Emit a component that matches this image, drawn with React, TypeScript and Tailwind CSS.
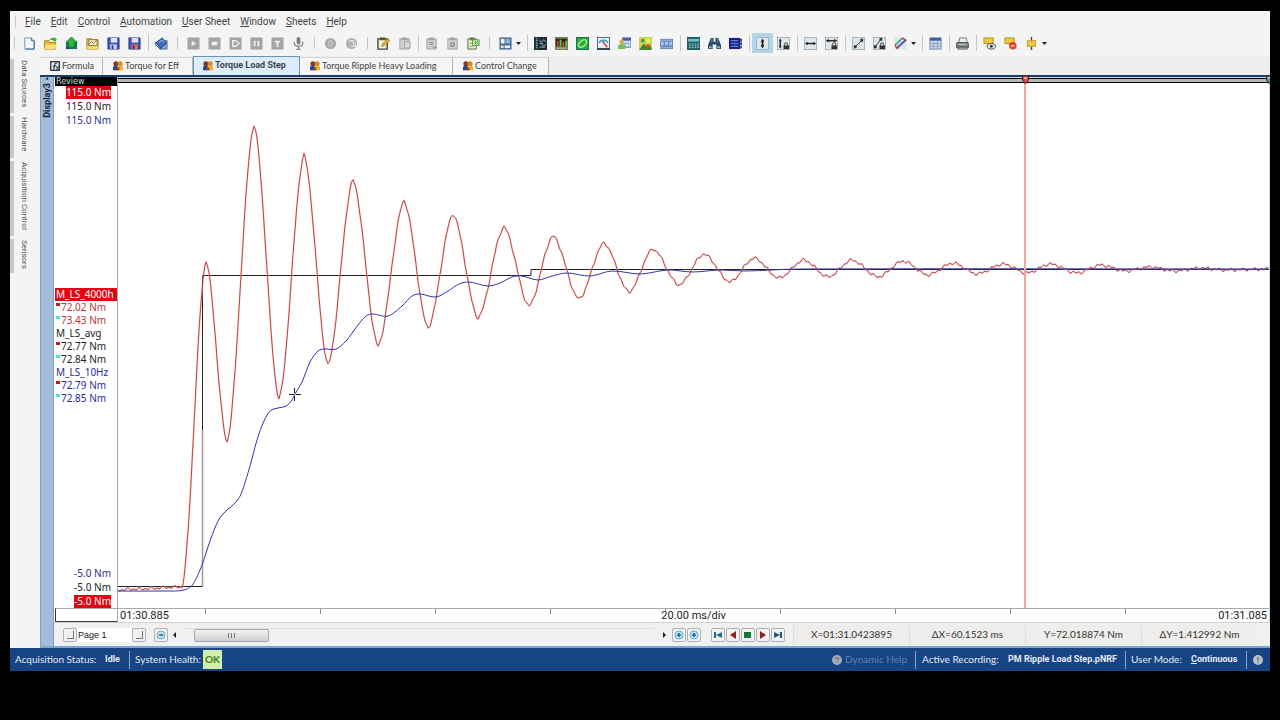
import type { ReactNode } from 'react';
import { clsx } from 'clsx';

/* ---------- toolbar icons, all on a 14x14 grid ---------- */

const Sheet = () => <path d="M2 1h7l3 3v9H2z" fill="#f4f8fd" stroke="#6f8db3" />;

const Floppy = ({ label }: { label: string }) => (
  <>
    <path d="M1 1h12v12H1z" fill="#3c55b8" stroke="#27398c" />
    <rect x="4" y="1" width="7" height="5" fill="#dfe6f8" />
    <rect x="3.500" y="8" width="7" height="5" fill={label} />
    <rect x="5" y="9" width="2" height="4" fill="#2c3a80" />
  </>
);

const GrayBox = ({ children }: { children: ReactNode }) => (
  <>
    <rect x="0.500" y="0.500" width="13" height="13" fill="#a4a4a4" />
    {children}
  </>
);

const GrayClip = ({ children }: { children?: ReactNode }) => (
  <>
    <path d="M2 2h10v11H2z" fill="#cfcfcf" stroke="#a2a2a2" />
    <rect x="4" y="0.500" width="6" height="3" rx="1" fill="#a2a2a2" />
    {children}
  </>
);

const Panel = ({ children }: { children: ReactNode }) => (
  <>
    <rect x="0.500" y="0.500" width="13" height="13" fill="#dce6ec" stroke="#a3b3bc" />
    {children}
  </>
);

const Lock = () => (
  <>
    <path d="M8 9V8a1.500 1.500 0 0 1 3.500 0v1" fill="none" stroke="#333" />
    <rect x="7" y="9" width="6" height="4" fill="#333" />
  </>
);

const Users = () => (
  <>
    <circle cx="4" cy="4" r="3.500" fill="#7a3b28" />
    <circle cx="10" cy="4" r="3.500" fill="#d88a25" />
    <path d="M0 13V8q4-3 7 0v5z" fill="#27439b" />
    <path d="M7 13V8q4-3 7 0v5z" fill="#e9b52a" />
    <path d="M5 9h4v4H5z" fill="#b23c22" />
  </>
);

const ICONS: Record<string, ReactNode> = {
  newFile: (
    <>
      <Sheet />
      <path d="M9 1v3h3" fill="#b9cde6" stroke="#49698f" />
      <path d="M12 4v9H3" fill="none" stroke="#3f5d83" />
    </>
  ),
  openFile: (
    <>
      <path d="M0.500 4h5l1 2h6v7H0.500z" fill="#e5b83b" stroke="#a98319" />
      <path d="M2 8h12l-2 5H0.500z" fill="#fbe382" />
      <path d="M6 3q2-3 5-2V0l3 3-3 3V4q-3-1-5-1z" fill="#3cab38" />
    </>
  ),
  loadFile: (
    <>
      <path d="M1 5h12v8H1z" fill="#1d7562" />
      <path d="M7 0l6 6h-3v5H4V6H1z" fill="#2fb739" stroke="#16793a" />
      <path d="M1 11h4v2H1z" fill="#264c9b" />
    </>
  ),
  openChart: (
    <>
      <path d="M1 2h5l1 1h6v10H1z" fill="#e6c341" stroke="#9e8220" />
      <rect x="3" y="3" width="9" height="6" fill="#f3f7d4" stroke="#7d7931" />
      <path d="M3 8l3-3 2 2 4-4" fill="none" stroke="#c8432c" />
      <path d="M1 10h12v3H1z" fill="#f6dd70" />
    </>
  ),
  save: <Floppy label="#cfd9f4" />,
  saveAs: <Floppy label="#e56a63" />,
  book: (
    <>
      <path d="M5 4h8v9H5z" fill="#8fa9cc" stroke="#49679a" />
      <path d="M1 6l7-5 4 6-6 5z" fill="#3a6fbb" stroke="#1c3f7f" />
      <path d="M1 6l5 6v1L0 8z" fill="#dbe7f5" stroke="#1c3f7f" />
      <path d="M4 6l4-3 2 3" fill="none" stroke="#a9cdf4" />
    </>
  ),
  play: <GrayBox><path d="M5 4l5 3-5 3z" fill="#efefef" /></GrayBox>,
  stop: <GrayBox><path d="M4 5h6v4H4z" fill="#efefef" /></GrayBox>,
  step: <GrayBox><path d="M4 4h3l4 3-4 3H4z" fill="none" stroke="#efefef" strokeWidth="1.500" /></GrayBox>,
  pause: <GrayBox><path d="M4 4h2v6H4zM8 4h2v6H8z" fill="#efefef" /></GrayBox>,
  trigger: <GrayBox><path d="M4 4h6v2H8v5H6V6H4z" fill="#efefef" /></GrayBox>,
  mic: (
    <>
      <rect x="5" y="0" width="4" height="8" rx="2" fill="#7c7c7c" />
      <path d="M2.500 5v2q0 3 4.500 3t4.500-3V5M7 10v3M4.500 13.500h5" fill="none" stroke="#8b8b8b" strokeWidth="1.500" />
    </>
  ),
  zero: (
    <>
      <circle cx="7" cy="7" r="6" fill="#a9a9a9" />
      <ellipse cx="7" cy="7" rx="2" ry="3" fill="none" stroke="#dedede" />
    </>
  ),
  calibrate: (
    <>
      <circle cx="7" cy="7" r="6" fill="#b0b0b0" />
      <path d="M4 4h5v4M6 10h5V6" fill="none" stroke="#dedede" strokeWidth="1.500" />
    </>
  ),
  editSheet: (
    <>
      <path d="M1 2h10v11H1z" fill="#f5f1d8" stroke="#4a4636" strokeWidth="1.500" />
      <rect x="3" y="0.500" width="6" height="3" fill="#57513a" />
      <path d="M5 10l1-3 6-5 2 2-6 5z" fill="#e6b528" stroke="#59461a" strokeWidth="0.500" />
    </>
  ),
  copySheet: <GrayClip><path d="M7 5h6v7H7z" fill="#d8d8d8" stroke="#a2a2a2" /></GrayClip>,
  addSheet: <GrayClip><path d="M4 6h5M4 8h5M8 11h5" stroke="#8c8c8c" /></GrayClip>,
  sheetOptions: <GrayClip><circle cx="7" cy="8" r="2" fill="none" stroke="#8c8c8c" strokeWidth="1.500" /></GrayClip>,
  excel: (
    <>
      <path d="M1 2h9v11H1z" fill="#e6efc8" stroke="#59654a" />
      <rect x="3" y="0.500" width="5" height="3" fill="#6a7550" />
      <path d="M6 3h7v6H6z" fill="#d9f0c5" stroke="#4f963f" />
      <path d="M8 4l4 4M12 4L8 8" stroke="#2f7d2c" />
      <path d="M3 7h2M3 10h4" stroke="#6f9d50" />
    </>
  ),
  layout: (
    <>
      <rect x="0.500" y="0.500" width="13" height="13" fill="#3f689f" />
      <path d="M2 2h4v5H2z" fill="#f6f3dc" />
      <path d="M7 2h5v5H7z" fill="#8fb4dd" />
      <path d="M2 9h3v3H2z" fill="#f2e6a6" />
      <path d="M6 9h6v3H6z" fill="#e3edf8" />
    </>
  ),
  wave: (
    <>
      <rect width="14" height="14" fill="#1e2c33" />
      <path d="M3 1v12" stroke="#8dc3d5" strokeDasharray="1 1" strokeWidth="2" />
      <path d="M6 3l2 3 2-3 3 2M6 7h3l1 3 3-2M6 11h6" fill="none" stroke="#91aeb5" />
    </>
  ),
  bars: (
    <>
      <rect width="14" height="14" fill="#70805c" />
      <rect x="1" y="2" width="12" height="8" fill="#23271b" />
      <path d="M3 4v6M9 5v5" stroke="#d3442b" strokeWidth="2" />
      <path d="M6 3v7M12 4v6" stroke="#63c541" strokeWidth="2" />
      <path d="M1 12h12" stroke="#b7c7a1" />
    </>
  ),
  xy: (
    <>
      <rect width="14" height="14" fill="#27694a" />
      <rect x="1" y="1" width="12" height="12" fill="#24a948" />
      <ellipse cx="7" cy="7" rx="5" ry="3" fill="none" stroke="#a3f37b" strokeWidth="1.500" transform="rotate(-40 7 7)" />
    </>
  ),
  meter: (
    <>
      <rect x="0.500" y="0.500" width="13" height="12" fill="#e8f2f6" stroke="#4c6470" />
      <path d="M2 6q5-5 10 0" fill="none" stroke="#4b9fc2" strokeWidth="2" />
      <path d="M6 5l5 6" stroke="#c43131" strokeWidth="1.500" />
      <path d="M0 13h14" stroke="#33464f" strokeWidth="2" />
    </>
  ),
  userTable: (
    <>
      <rect x="5" y="1" width="9" height="10" fill="#e4eefb" stroke="#4d73b5" />
      <path d="M5 2.500h9" stroke="#3d61a8" strokeWidth="3" />
      <path d="M8 4v7M11 4v7M5 7h9" stroke="#92abd0" />
      <circle cx="4" cy="5" r="2.500" fill="#e0a95b" />
      <path d="M0 13V9q4-3 8 0v4z" fill="#6fc45d" />
    </>
  ),
  image: (
    <>
      <rect width="14" height="14" fill="#cfd84a" />
      <path d="M0 14l5-7 4 4 3-2 2 5z" fill="#3e8a33" />
      <circle cx="4" cy="4" r="2" fill="#4c9c3d" />
      <circle cx="10" cy="4" r="2" fill="#f2ef9a" />
      <rect x="8" y="8" width="4" height="3" fill="#d24d37" />
    </>
  ),
  film: (
    <>
      <rect y="2" width="14" height="11" fill="#6d86bd" />
      <path d="M0 3.500h14M0 11.500h14" stroke="#dbe5f6" strokeDasharray="1 1" />
      <path d="M1 5h3v4H1zM5.500 5h3v4h-3zM10 5h3v4h-3z" fill="#a9c2ee" />
    </>
  ),
  grid: (
    <>
      <rect width="14" height="14" fill="#1f5966" />
      <path d="M1 2h12v3H1z" fill="#69c0bd" />
      <path d="M2 7.500h11M2 9.500h11M2 11.500h11" stroke="#9fe0d0" strokeDasharray="2 1" />
    </>
  ),
  binoculars: (
    <>
      <path d="M3 1h3v4h2V1h3l3 8v4H9V8H5v5H0V9z" fill="#2d4a66" />
      <path d="M1 10h3v2H1zM10 10h3v2h-3z" fill="#8fb6d5" />
      <path d="M4 2v4M10 2v4" stroke="#6d93b5" />
    </>
  ),
  display: (
    <>
      <rect y="1" width="12" height="12" fill="#1a2186" />
      <path d="M2 4h8M2 7h3l1-1 1 2 1-1h2M2 10h8" fill="none" stroke="#7f9cf2" />
      <path d="M12 2h2v3h-2zM12 6h2v3h-2zM12 10h2v2h-2z" fill="#39406c" />
    </>
  ),
  cursorV: (
    <Panel>
      <path d="M7 3v8" stroke="#222" strokeWidth="2" />
      <path d="M5 5l2-3 2 3zM5 9l2 3 2-3z" fill="#222" />
    </Panel>
  ),
  cursorVLock: <Panel><path d="M3.500 3v8" stroke="#222" strokeWidth="1.500" /><path d="M2 4.500l1.500-3L5 4.500zM2 9.500l1.500 3L5 9.500z" fill="#222" /><Lock /></Panel>,
  cursorH: <Panel><path d="M2 7h10" stroke="#222" strokeWidth="1.500" /><path d="M4 5L1 7l3 2zM10 5l3 2-3 2z" fill="#222" /></Panel>,
  cursorHLock: <Panel><path d="M2 4h10" stroke="#222" strokeWidth="1.500" /><path d="M4 2L1 4l3 2zM10 2l3 2-3 2z" fill="#222" /><Lock /></Panel>,
  slope: <Panel><path d="M3 11l8-8" stroke="#333" /><path d="M2 9h3v3H2zM9 2h3v3H9z" fill="#333" /></Panel>,
  slopeLock: <Panel><path d="M2 11l6-8" stroke="#333" /><path d="M1 9h3v3H1zM7 1h3v3H7z" fill="#333" /><Lock /></Panel>,
  measure: (
    <>
      <rect x="0.500" y="0.500" width="13" height="13" fill="#dde7ec" />
      <path d="M1 9l8-8" stroke="#2d9d55" strokeWidth="1.500" />
      <path d="M3 12l10-9" stroke="#4352c9" strokeWidth="2" />
      <path d="M1 9l3 4M9 1l4 3" stroke="#c42f3c" strokeWidth="1.500" />
      <path d="M4 8l2 2M7 5l2 2" stroke="#b34a98" />
    </>
  ),
  table: (
    <>
      <rect x="1" y="1" width="12" height="12" fill="#d3deee" stroke="#6e829f" />
      <path d="M1 2.500h12" stroke="#375ea8" strokeWidth="3" />
      <path d="M5 4v9M9 4v9M1 7h12M1 10h12" stroke="#8c9dba" />
    </>
  ),
  printer: (
    <>
      <path d="M4 1h7l1 5H3z" fill="#eef1f2" stroke="#6e7578" />
      <path d="M1 6h12l1 5H0z" fill="#7f878a" stroke="#4b5153" />
      <path d="M2 11h10v2H2z" fill="#c6cccd" stroke="#4b5153" />
      <path d="M3 8h8" stroke="#cdd3d4" />
    </>
  ),
  noteView: (
    <>
      <path d="M1 1h10v6H8L6 9V7H1z" fill="#f0c83a" stroke="#b08c1e" />
      <ellipse cx="9" cy="10" rx="4.500" ry="3" fill="#dde6da" stroke="#3b4b3f" />
      <circle cx="9" cy="10" r="1.500" fill="#24362c" />
    </>
  ),
  noteDelete: (
    <>
      <path d="M1 1h10v6H8L6 9V7H1z" fill="#f0c83a" stroke="#b08c1e" />
      <circle cx="9.500" cy="9.500" r="4" fill="#e0432d" />
      <path d="M7.500 9.500h4" stroke="#fbd4cc" strokeWidth="1.500" />
    </>
  ),
  marker: (
    <>
      <path d="M7 0v14" stroke="#3f454b" strokeWidth="1.500" />
      <rect x="2.500" y="4" width="9" height="6" fill="#f0c645" stroke="#c29a2c" />
    </>
  ),
  users: <Users />,
  formula: (
    <>
      <rect x="1" y="1" width="12" height="12" fill="#e9edf0" stroke="#36424c" strokeWidth="2" />
      <path d="M10 3q-3-1-3.500 3L5 12M4 7h5M9 8l3 4M12 8l-3 4" fill="none" stroke="#1d2733" strokeWidth="1.500" />
    </>
  ),
};

function Icon({ name, className = 'h-[14px] w-[14px]' }: { name: string; className?: string }) {
  return (
    <svg viewBox="0 0 14 14" className={clsx('shrink-0', className)} aria-hidden="true">
      {ICONS[name]}
    </svg>
  );
}

/* '|' is a thin separator, ':' is the grip between two toolbars, a trailing 'v' adds a drop arrow */
const TOOLBAR = [
  ':', 'newFile', 'openFile', 'loadFile', 'openChart', 'save', 'saveAs', '|', 'book',
  ':', 'play', 'stop', 'step', 'pause', 'trigger', 'mic',
  ':', 'zero', 'calibrate',
  ':', 'editSheet', 'copySheet', '|', 'addSheet', 'sheetOptions', 'excel',
  ':', 'layout v', '|', 'wave', 'bars', 'xy', 'meter', 'userTable', 'image', 'film',
  '|', 'grid', 'binoculars', 'display', '|', 'cursorV', 'cursorVLock',
  '|', 'cursorH', 'cursorHLock', '|', 'slope', 'slopeLock', 'measure v',
  '|', 'table', '|', 'printer', '|', 'noteView', 'noteDelete', 'marker v',
];

const MENU = ['File', 'Edit', 'Control', 'Automation', 'User Sheet', 'Window', 'Sheets', 'Help'];

const TABS = [
  { label: 'Formula', icon: 'formula', width: 'w-[63px]' },
  { label: 'Torque for Eff', icon: 'users', width: 'w-[90px]' },
  { label: 'Torque Load Step', icon: 'users', width: 'w-[107px]', active: true },
  { label: 'Torque Ripple Heavy Loading', icon: 'users', width: 'w-[153px]' },
  { label: 'Control Change', icon: 'users', width: 'w-[96px]' },
];

const DOCKED = [
  { label: 'Data Sources', height: 'h-[54px]' },
  { label: 'Hardware', height: 'h-[42px]' },
  { label: 'Acquisition Control', height: 'h-[75px]' },
  { label: 'Sensors', height: 'h-[34px]' },
];

const CHANNELS = [
  { name: 'M_LS_4000h', values: ['72.02 Nm', '73.43 Nm'], color: 'text-[#c8323c]', head: 'bg-[#e00510] text-white' },
  { name: 'M_LS_avg', values: ['72.77 Nm', '72.84 Nm'], color: 'text-[#222]', head: 'text-[#222]' },
  { name: 'M_LS_10Hz', values: ['72.79 Nm', '72.85 Nm'], color: 'text-[#2a2a9c]', head: 'text-[#2a2a9c]' },
];

const READOUTS = ['X=01:31.0423895', 'ΔX=60.1523 ms', 'Y=72.018874 Nm', 'ΔY=1.412992 Nm'];

/* ---------- signals ---------- */

type Point = [number, number];

// turning points of the 4 kHz torque signal
const TORQUE: Point[] = [
  [117, 590], [135, 589], [182, 587], [206, 261], [227, 442], [254, 125], [279, 399], [304, 155],
  [328, 365], [353, 180], [378, 346], [404, 201], [428, 328], [453, 214], [478, 318],
  [504, 227], [529, 306], [553, 236], [579, 299], [604, 243], [629, 292], [653, 249],
  [679, 285], [704, 254], [730, 282], [754, 258], [779, 278], [804, 260], [828, 277],
  [852, 260], [878, 277], [903, 261], [928, 275], [953, 263], [977, 274], [1003, 264],
  [1027, 273], [1050, 264], [1077, 273], [1101, 265], [1125, 271], [1150, 267],
  [1175, 271], [1200, 268], [1225, 270], [1269, 269],
];

const FILTERED: Point[] = [
  [117, 591], [165, 591], [184, 590], [193, 584], [202, 565], [210, 541], [218, 521], [226, 511],
  [234, 504], [241, 494], [250, 466], [257, 440], [264, 421], [270, 411], [278, 408],
  [286, 406], [292, 400], [295, 394], [302, 382], [310, 362], [318, 351], [324, 349],
  [336, 349], [346, 341], [358, 325], [366, 316], [373, 314], [388, 316], [402, 306],
  [412, 296], [420, 294], [436, 297], [448, 291], [459, 284], [469, 282], [488, 286],
  [500, 283], [512, 277], [522, 276], [538, 280], [552, 276], [567, 273], [590, 276],
  [612, 271], [640, 274], [668, 270], [692, 272], [720, 270], [745, 271], [800, 269],
  [1269, 269],
];

function torquePath() {
  const out: string[] = [];
  for (let i = 0; i < TORQUE.length - 1; i++) {
    const [x0, y0] = TORQUE[i];
    const [x1, y1] = TORQUE[i + 1];
    for (let x = x0; x < x1; x++) {
      const u = (x - x0) / (x1 - x0);
      // a little linear share keeps the peaks pointed
      const t = 0.78 * ((1 - Math.cos(Math.PI * u)) / 2) + 0.22 * u;
      const noise = Math.sin(x * 1.07) * 0.9 + Math.sin(x * 0.53) * 0.8;
      out.push(`${x} ${(y0 + (y1 - y0) * t + noise).toFixed(1)}`);
    }
  }
  return `M${out.join('L')}`;
}

function smoothPath(p: Point[]) {
  let d = `M${p[0][0]} ${p[0][1]}`;
  for (let i = 0; i < p.length - 1; i++) {
    const a = p[Math.max(i - 1, 0)];
    const b = p[i];
    const c = p[i + 1];
    const e = p[Math.min(i + 2, p.length - 1)];
    // tangent scaled by its own segment, so uneven spacing does not overshoot
    const h = (c[0] - b[0]) / 3;
    const mb = (c[1] - a[1]) / (c[0] - a[0]);
    const mc = (e[1] - b[1]) / (e[0] - b[0]);
    d += `C${b[0] + h} ${b[1] + h * mb} ${c[0] - h} ${c[1] - h * mc} ${c[0]} ${c[1]}`;
  }
  return d;
}

function Chart() {
  return (
    <svg viewBox="118 83 1151 525" preserveAspectRatio="none" className="min-h-0 w-full flex-1" role="img" aria-label="Torque">
      <path d="M117 586.500H202.500V275.500H531V269.500H1269" fill="none" stroke="#222" />
      <path d="M202.500 586V430" stroke="#98989c" strokeWidth="1.500" />
      <path d={torquePath()} fill="none" stroke="#f5b5b5" strokeWidth="2" opacity="0.500" />
      <path d={torquePath()} fill="none" stroke="#b03434" strokeWidth="0.900" />
      <path d={smoothPath(FILTERED)} fill="none" stroke="#3434ac" />
      <path d="M1025 82V608" stroke="#f2aaa4" strokeWidth="2" />
      {/* crosshair */}
      <path d="M289 394.500h5M296 394.500h5M294.500 388v5M294.500 396v5" stroke="#222" />
    </svg>
  );
}

function Menu() {
  return (
    <nav className="flex h-[21px] items-center pl-[5px] text-[10px] text-[#444]">
      <span className="mr-[4px] h-3 w-px bg-[#c8c8c8]" />
      {MENU.map((item) => (
        <button key={item} className="px-[5px]">
          <u>{item[0]}</u>
          {item.slice(1)}
        </button>
      ))}
    </nav>
  );
}

function Toolbar() {
  return (
    <div className="mb-[2px] flex h-[22px] items-center">
      {TOOLBAR.map((entry, i) => {
        if (entry === ':') {
          return (
            <span key={i} className="flex w-[11px] shrink-0 justify-center first:w-[9px]">
              <span className="h-3 w-px bg-[#c4c4c4]" />
            </span>
          );
        }
        if (entry === '|') {
          return (
            <span key={i} className="flex w-[6px] shrink-0 justify-center">
              <span className="h-4 w-px bg-[#c4c4c4]" />
            </span>
          );
        }
        const [name, drop] = entry.split(' ');
        return (
          <button
            key={i}
            aria-label={name}
            className={clsx(
              'flex h-5 shrink-0 items-center',
              drop ? 'w-[29px] gap-1 pl-1' : 'w-[21px] justify-center',
              name === 'cursorV' && 'bg-[#b4d4ec]',
            )}
          >
            <Icon name={name} className="h-[13px] w-[13px]" />
            {drop && (
              <svg viewBox="0 0 5 3" className="h-[3px] w-[5px]">
                <path d="M0 0h5L2.500 3z" fill="#222" />
              </svg>
            )}
          </button>
        );
      })}
    </div>
  );
}

function Tabs() {
  return (
    <div role="tablist" className="flex h-[19px] items-end bg-[#eeeeee] font-[Lato,sans-serif] text-[9px] text-[#444]">
      {TABS.map((tab) => (
        <button
          key={tab.label}
          role="tab"
          aria-selected={!!tab.active}
          className={clsx(
            'flex shrink-0 items-center gap-[2px] border pl-[9px] whitespace-nowrap',
            tab.width,
            tab.active
              ? 'h-[19px] border-b-0 border-[#6a93b8] bg-[#dcedf9] font-[Roboto,sans-serif] font-bold text-[#3c4650]'
              : 'h-[18px] border-transparent border-t-[#d6d6d6] border-r-[#b4b4b4] bg-[#f5f5f5]',
          )}
        >
          <Icon name={tab.icon} className="h-[10px] w-[10px]" />
          {tab.label}
        </button>
      ))}
    </div>
  );
}

function DockedPanels() {
  return (
    <aside className="flex w-[30px] shrink-0 flex-col gap-[3px] pt-[3px] text-[8px] leading-[12px] text-[#555]">
      {DOCKED.map((panel) => (
        <button key={panel.label} className={clsx('flex w-5 items-start justify-end border-l-4 border-[#c6c6c6] pt-px', panel.height)}>
          <span className="[writing-mode:vertical-rl] whitespace-nowrap">{panel.label}</span>
        </button>
      ))}
    </aside>
  );
}

function ChannelPanel() {
  return (
    <div className="flex w-[63px] shrink-0 flex-col border-r border-[#a8a8a8] font-['Noto_Sans'] text-[10px]">
      <div className="h-[9px] bg-black pl-px font-['DejaVu_Sans'] text-[8px] leading-[9px] text-[#ddd]">Review</div>
      <div className="flex flex-col items-end gap-px pr-[6px] leading-[13px]">
        <span className="bg-[#e00510] text-white">115.0 Nm</span>
        <span className="text-[#222]">115.0 Nm</span>
        <span className="text-[#2a2a9c]">115.0 Nm</span>
      </div>
      <div className="mt-[161px] leading-[13px]">
        {CHANNELS.map((ch) => (
          <div key={ch.name}>
            <div className={clsx('pl-px', ch.head)}>{ch.name}</div>
            {ch.values.map((value, i) => (
              <div key={value} className={clsx('flex pl-px', ch.color)}>
                <span className={clsx('mt-[2px] mr-px h-[3px] w-1', i === 0 ? 'bg-[#c01818]' : 'bg-[#4fe0e4]')} />
                {value}
              </div>
            ))}
          </div>
        ))}
      </div>
      <div className="mt-auto flex flex-col items-end gap-px pr-[6px] leading-[13px]">
        <span className="text-[#2a2a9c]">-5.0 Nm</span>
        <span className="text-[#222]">-5.0 Nm</span>
        <span className="bg-[#e00510] text-white">-5.0 Nm</span>
      </div>
      <div className="h-[14px] border border-r-0 border-[#333] border-t-[#aaa]" />
    </div>
  );
}

function Pin({ className, fill }: { className: string; fill: string }) {
  return (
    <svg viewBox="0 0 7 10" className={clsx('absolute top-[-2px] h-[10px] w-[7px]', className)}>
      <path d="M0.500 1h6v4L3.500 9 0.500 5z" fill={fill} stroke="#5e1418" />
      <path d="M2 3h3" stroke="#fff" />
    </svg>
  );
}

function ChartArea() {
  return (
    <div className="relative flex min-w-0 flex-1 flex-col border-r border-[#c4dbe8]">
      <div className="h-px shrink-0 bg-[#c9d6e4]" />
      <div className="h-[5px] shrink-0 border-y border-black bg-[#b4b9b4]" />
      <Pin className="left-[78.5%]" fill="#d44c50" />
      <Pin className="right-[-4px]" fill="#3aa79d" />
      <Chart />
      <div className="relative flex h-[14px] shrink-0 justify-between border-t border-[#a8a8a8] px-[2px] text-[11px] leading-[14px] text-[#222]">
        <div className="absolute inset-x-0 top-0 flex justify-between pr-[143px] pl-[87px]">
          {Array.from({ length: 9 }, (_, i) => (
            <span key={i} className="h-[5px] w-px bg-[#888]" />
          ))}
        </div>
        <span>01:30.885</span>
        <span>20.00 ms/div</span>
        <span>01:31.085</span>
      </div>
    </div>
  );
}

const smallButton = 'flex h-[14px] w-[14px] shrink-0 items-center justify-center rounded-xs border border-[#b0b0b0] bg-[#f2f2f2]';

function Magnifier({ plus }: { plus?: boolean }) {
  return (
    <svg viewBox="0 0 10 10" className="h-[10px] w-[10px]">
      <circle cx="5" cy="5" r="4" fill="#bfe3f3" stroke="#69a9c8" />
      <path d={plus ? 'M3 5h4M5 3v4' : 'M3 5h4'} stroke="#16679b" strokeWidth="1.500" />
    </svg>
  );
}

const TRANSPORT = [
  { label: 'First', d: 'M1 1h2v6H1zM9 1v6L3 4z', fill: '#1c7386' },
  { label: 'Back', d: 'M8 0v8L2 4z', fill: '#952020' },
  { label: 'Stop', d: 'M1 1h7v6H1z', fill: '#147a3a' },
  { label: 'Play', d: 'M2 0v8l6-4z', fill: '#952020' },
  { label: 'Last', d: 'M7 1h2v6H7zM1 1v6l6-3z', fill: '#1c5b86' },
];

function PageBar() {
  return (
    <div className="flex h-[24px] shrink-0 items-center border-t border-[#d0d0d0] bg-[#f0f0f0] pl-[9px]">
      <button aria-label="Previous page" className={smallButton}>
        <span className="h-2 w-[7px] border-r border-b border-[#777] bg-[#eee]" />
      </button>
      <input aria-label="Page" defaultValue="Page 1" className="h-[14px] w-[55px] bg-white pl-px font-['Liberation_Sans'] text-[9px] text-[#222]" />
      <button aria-label="Next page" className={smallButton}>
        <span className="h-2 w-[7px] border-r border-b border-[#777] bg-[#eee]" />
      </button>
      <button aria-label="Zoom out" className={clsx(smallButton, 'ml-2')}>
        <Magnifier />
      </button>
      <div className="flex min-w-0 flex-1 items-center pr-[6px] pl-[5px]">
        <svg viewBox="0 0 3 6" className="h-[6px] w-[3px]"><path d="M3 0v6L0 3z" fill="#222" /></svg>
        <div className="mx-2 h-[14px] flex-1 border-t border-[#e2e2e2] px-[10px]">
          <div className="flex h-[13px] w-[75px] items-center justify-center gap-[2px] rounded-xs border border-[#a6a6a6] bg-linear-to-b from-[#f2f2f2] to-[#cfcfcf]">
            <span className="h-[5px] w-px bg-[#777]" />
            <span className="h-[5px] w-px bg-[#777]" />
            <span className="h-[5px] w-px bg-[#777]" />
          </div>
        </div>
        <svg viewBox="0 0 3 6" className="h-[6px] w-[3px]"><path d="M0 0v6l3-3z" fill="#222" /></svg>
      </div>
      <div className="flex gap-px">
        <button aria-label="Zoom in" className={smallButton}><Magnifier plus /></button>
        <button aria-label="Zoom full" className={smallButton}><Magnifier plus /></button>
      </div>
      <div className="ml-[10px] flex gap-px">
        {TRANSPORT.map((b) => (
          <button key={b.label} aria-label={b.label} className={smallButton}>
            <svg viewBox="0 0 10 8" className="h-2 w-[10px]"><path d={b.d} fill={b.fill} /></svg>
          </button>
        ))}
      </div>
      <div className="mr-[13px] ml-[8px] flex h-5 font-[Lato,sans-serif] text-[10px] text-[#333]">
        {READOUTS.map((text) => (
          <span key={text} className="flex w-[116px] items-center justify-center border-l border-[#dcdcdc] bg-[#efedeb]">
            {text}
          </span>
        ))}
      </div>
    </div>
  );
}

function StatusBar() {
  const divider = 'h-[18px] w-px shrink-0 bg-[#8aa4cc]';
  return (
    <footer className="flex h-[23px] shrink-0 items-center bg-[#174483] pl-[5px] font-[Lato,sans-serif] text-[10px] text-[#e4eaf4]">
      <span className="w-[90px]">Acquisition Status:</span>
      <b className="w-[24px] font-[Roboto,sans-serif] text-[9px]">Idle</b>
      <span className={divider} />
      <span className="w-[73px] pl-[5px] whitespace-nowrap">System Health:</span>
      <b className="flex h-[19px] w-[19px] items-center justify-center bg-[#d3edaa] text-[#3d8020]">OK</b>
      <span className="ml-auto flex items-center gap-[3px] text-[#5e7fb3]">
        <svg viewBox="0 0 10 10" className="h-[10px] w-[10px]">
          <circle cx="5" cy="5" r="5" fill="#a4abb6" />
          <path d="M3.500 4q0-1.500 1.500-1.500T6.500 4Q6 5 5 5.500V6M5 7v1" fill="none" stroke="#5a6c88" />
        </svg>
        Dynamic Help
      </span>
      <span className={clsx(divider, 'ml-2')} />
      <span className="w-[92px] pl-[6px]">Active Recording:</span>
      <b className="w-[117px] font-[Roboto,sans-serif] text-[9px] whitespace-nowrap">PM Ripple Load Step.pNRF</b>
      <span className={divider} />
      <span className="w-[65px] pl-[5px] whitespace-nowrap">User Mode:</span>
      <b className="w-[55px] font-[Roboto,sans-serif] text-[9px]"><u>C</u>ontinuous</b>
      <span className={divider} />
      <svg viewBox="0 0 10 10" className="mr-[7px] ml-[6px] h-[10px] w-[10px]">
        <circle cx="5" cy="5" r="5" fill="#b9bfc4" />
        <path d="M5 2v4M5 7v1" stroke="#6d7780" strokeWidth="1.500" />
      </svg>
    </footer>
  );
}

export default function App() {
  return (
    <div className="flex h-screen flex-col bg-black px-[10px] pt-[11px] pb-[49px] font-[Roboto,sans-serif]">
      <div className="flex min-h-0 flex-1 flex-col overflow-hidden bg-[#f4f4f4]">
        <Menu />
        <Toolbar />
        <div className="flex min-h-0 flex-1">
          <DockedPanels />
          <main className="flex min-w-0 flex-1 flex-col">
            <Tabs />
            <div className="flex min-h-0 flex-1 border-t-2 border-b-2 border-t-[#1d3c68] border-b-[#7fa3cc]">
              <div className="flex w-[14px] shrink-0 flex-col items-center border-x border-[#7d9fc2] bg-[#a3bdd9]">
                <span className="flex items-center gap-[3px] text-[9px] leading-[12px] font-bold text-[#16202c] [writing-mode:vertical-rl]">
                  <span>•</span>
                  <span className="rotate-180">Display3</span>
                </span>
              </div>
              <div className="flex min-w-0 flex-1 flex-col">
                <div className="flex min-h-0 flex-1 bg-white pl-px">
                  <ChannelPanel />
                  <ChartArea />
                </div>
                <PageBar />
              </div>
            </div>
          </main>
        </div>
        <StatusBar />
      </div>
    </div>
  );
}
